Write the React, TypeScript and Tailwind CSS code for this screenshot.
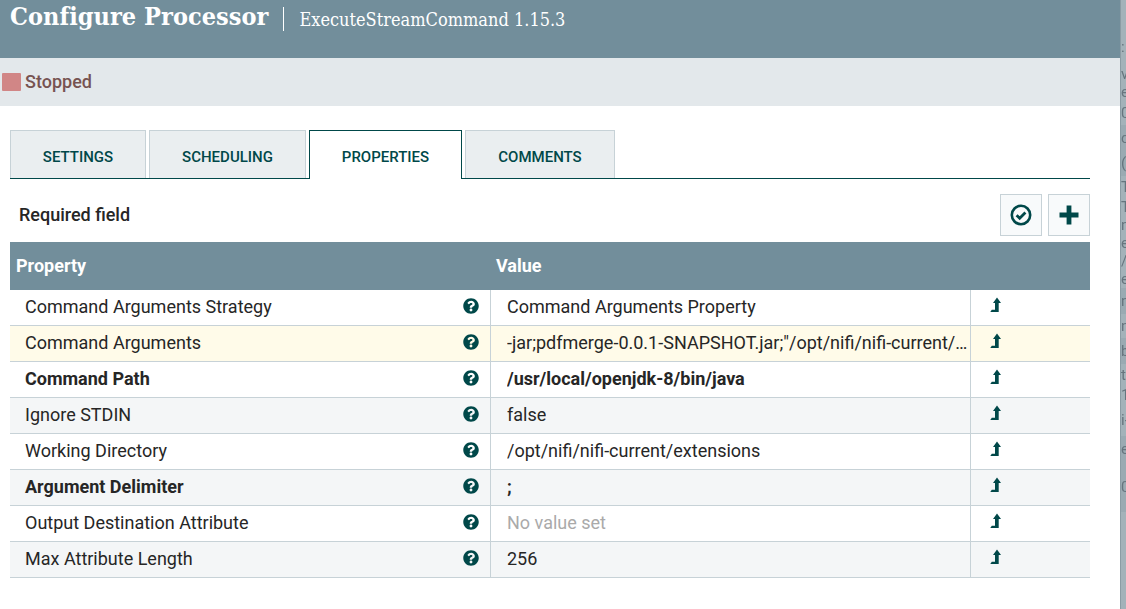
import { FaQuestionCircle } from 'react-icons/fa'

const tabs = [
  { label: 'SETTINGS', width: 'w-[136px]' },
  { label: 'SCHEDULING', width: 'w-[157px]' },
  { label: 'PROPERTIES', width: 'w-[153px]', active: true },
  { label: 'COMMENTS', width: 'w-[150px]' },
]

const rows = [
  { name: 'Command Arguments Strategy', value: 'Command Arguments Property', bg: 'bg-white' },
  {
    name: 'Command Arguments',
    value: '-jar;pdfmerge-0.0.1-SNAPSHOT.jar;"/opt/nifi/nifi-current/extensions/merged.pdf"',
    bg: 'bg-[#fffbe9]',
  },
  { name: 'Command Path', value: '/usr/local/openjdk-8/bin/java', bg: 'bg-white', bold: true },
  { name: 'Ignore STDIN', value: 'false', bg: 'bg-[#f4f6f7]' },
  { name: 'Working Directory', value: '/opt/nifi/nifi-current/extensions', bg: 'bg-white' },
  { name: 'Argument Delimiter', value: ';', bg: 'bg-[#f4f6f7]', bold: true },
  { name: 'Output Destination Attribute', value: 'No value set', bg: 'bg-white', empty: true },
  { name: 'Max Attribute Length', value: '256', bg: 'bg-[#f4f6f7]' },
]

// bits of the page behind the dialog, clipped at the window edge
const backdrop = [
  { text: '', h: 'h-[36px]' },
  { text: ':', h: 'h-[22px]' },
  { text: '', h: 'h-[6px]' },
  { text: 'v', h: 'h-[19px]' },
  { text: 'es', h: 'h-[18px]' },
  { text: '0', h: 'h-[24px]' },
  { text: 'c', h: 'h-[25px]', band: true },
  { text: '(', h: 'h-[26px]', band: true },
  { text: 'T', h: 'h-[22px]' },
  { text: 'T', h: 'h-[18px]' },
  { text: 'n', h: 'h-[18px]' },
  { text: 'es', h: 'h-[18px]' },
  { text: '/', h: 'h-[18px]' },
  { text: 'es', h: 'h-[18px]' },
  { text: 'n', h: 'h-[26px]', band: true },
  { text: 'n', h: 'h-[24px]' },
  { text: 'b', h: 'h-[26px]', band: true },
  { text: 't', h: 'h-[22px]' },
  { text: '1', h: 'h-[18px]' },
  { text: 'i-', h: 'h-[32px]' },
  { text: 'e', h: 'h-[26px]', band: true },
  { text: '0', h: 'h-[50px]', band: true },
]

function LevelUpIcon() {
  return (
    <svg width="12" height="16" viewBox="0 0 12 16" className="fill-[#004849]">
      <path d="M7 .5 11 6H8.7v9H.3l1.5-2.3H5V6H3z" />
    </svg>
  )
}

function PropertyRow({ row }: { row: (typeof rows)[number] }) {
  return (
    <div className={`flex h-9 border-b border-[#c7d2d7] text-[18px] text-[#262626] ${row.bg}`}>
      <div className={`flex w-[480px] items-center justify-between pb-[2px] pl-[15px] pr-[11px] ${row.bold ? 'font-bold' : ''}`}>
        <span>{row.name}</span>
        <FaQuestionCircle className="mb-[2px] text-[16px] text-[#004849]" />
      </div>
      <div
        className={`flex w-[480px] items-center border-l border-[#c7d2d7] pb-[2px] pl-4 ${row.bold ? 'font-bold' : ''} ${
          row.empty ? 'text-[#aaaaaa]' : ''
        }`}
      >
        <span className="truncate">{row.value}</span>
      </div>
      <div className="flex flex-1 border-l border-[#c7d2d7] pl-[19px] pt-[7px]">
        <LevelUpIcon />
      </div>
    </div>
  )
}

export default function App() {
  return (
    <div className="flex h-[609px] w-[1126px] overflow-hidden bg-white font-['Roboto',sans-serif]">
      <div className="w-[1120px] shrink-0">
        <div className="flex h-[58px] items-start bg-[#728e9b] pl-[10px] text-white">
          <h1 className="mt-[1px] font-['DejaVu_Serif_Condensed','DejaVu_Serif',serif] text-[25px] leading-[32px] font-bold tracking-[0.05px]">
            Configure Processor
          </h1>
          <div className="mt-[7px] ml-[15px] h-[24px] w-px bg-white" />
          <div className="mt-[4px] ml-[15px] font-['DejaVu_Serif_Condensed','DejaVu_Serif',serif] text-[18px] leading-[32px]">
            ExecuteStreamCommand 1.15.3
          </div>
        </div>

        <div className="flex h-[48px] items-center bg-[#e3e8eb] pl-[2px]">
          <div className="h-[18px] w-[19px] rounded-[1px] bg-[#d18686]" />
          <span className="mb-[2px] ml-[4px] text-[18px] font-medium text-[#775351]">Stopped</span>
        </div>

        <div className="w-[1090px] pt-6 pl-[10px]">
          <div className="flex h-[49px] gap-[3px] border-b border-[#004849]">
            {tabs.map((tab) => (
              <div
                key={tab.label}
                className={`flex items-center justify-center text-[15px] font-medium text-[#004849] ${tab.width} ${
                  tab.active
                    ? 'h-[49px] border border-b-0 border-[#004849] bg-white pt-[4px]'
                    : 'h-[48px] border border-b-0 border-[#c7d2d7] bg-[#eaeef0] pt-[6px]'
                }`}
              >
                {tab.label}
              </div>
            ))}
          </div>

          <div className="flex h-[63px] items-end justify-between pb-[6px]">
            <span className="mb-[8px] ml-[9px] text-[18px] font-medium text-[#262626]">Required field</span>
            <div className="flex gap-[6px]">
              <button className="flex h-[42px] w-[42px] items-center justify-center border border-[#c7d2d7] bg-[#f8fafb]">
                <svg width="22" height="22" viewBox="0 0 22 22" fill="none" className="stroke-[#004849]">
                  <circle cx="11" cy="11" r="9.2" strokeWidth="2.6" />
                  <path d="M6.6 11.2 9.7 14.3 15.4 8.6" strokeWidth="2.8" />
                </svg>
              </button>
              <button className="flex h-[42px] w-[42px] items-center justify-center border border-[#c7d2d7] bg-[#f8fafb]">
                <svg width="20" height="20" viewBox="0 0 20 20" className="fill-[#004849]">
                  <path d="M7.6.5h4.8v7.1h7.1v4.8h-7.1v7.1H7.6v-7.1H.5V7.6h7.1z" />
                </svg>
              </button>
            </div>
          </div>

          <div className="flex h-[48px] items-center bg-[#728e9b] pb-[2px] text-[18px] font-bold text-white">
            <div className="w-[480px] pl-[6px]">Property</div>
            <div className="pl-[6px]">Value</div>
          </div>
          {rows.map((row) => (
            <PropertyRow key={row.name} row={row} />
          ))}
        </div>
      </div>

      <div className="flex-1 overflow-hidden border-l border-[#8b9ca4] bg-[#a3b2b9] text-[15px] text-[#66757e]">
        <div className="blur-[0.6px]">
          {backdrop.map((item, i) => (
            <div
              key={i}
              className={`flex items-center leading-[16px] whitespace-nowrap ${item.h} ${item.band ? 'bg-[#9aaab2]' : ''}`}
            >
              {item.text}
            </div>
          ))}
        </div>
      </div>
    </div>
  )
}
